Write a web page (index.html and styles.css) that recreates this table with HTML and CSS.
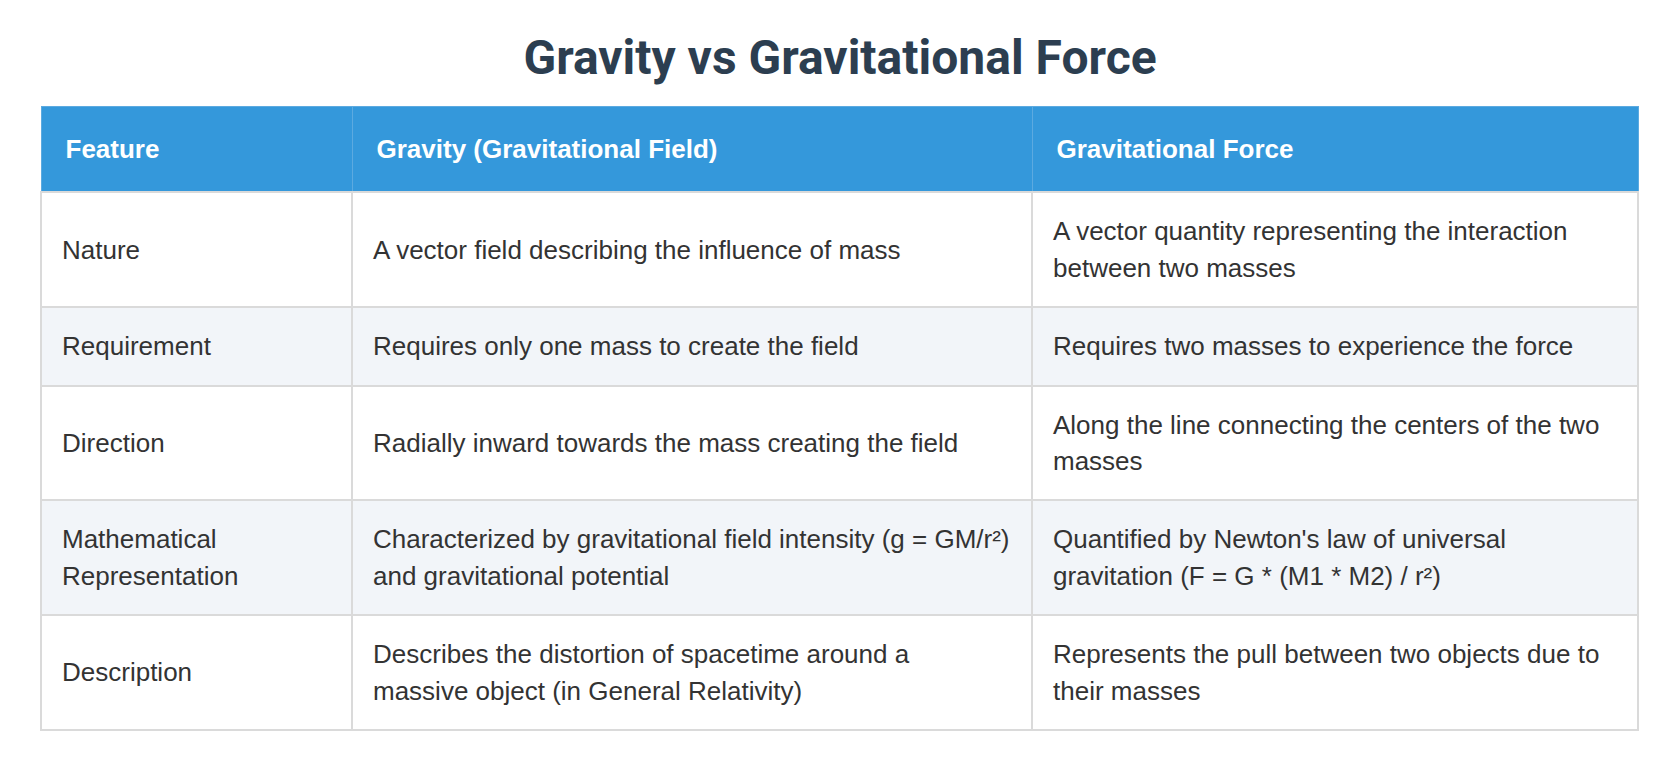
FILE: index.html
```html
<!DOCTYPE html>
<html lang="en">
<head>
<meta charset="utf-8">
<title>Gravity vs Gravitational Force</title>
<link rel="stylesheet" href="styles.css">
</head>
<body>
<main class="page">
  <h1 class="title">Gravity vs Gravitational Force</h1>
  <table class="compare">
    <colgroup>
      <col class="col-feature">
      <col class="col-gravity">
      <col class="col-force">
    </colgroup>
    <thead>
      <tr>
        <th>Feature</th>
        <th>Gravity (Gravitational Field)</th>
        <th>Gravitational Force</th>
      </tr>
    </thead>
    <tbody>
      <tr>
        <td>Nature</td>
        <td>A vector field describing the influence of mass</td>
        <td>A vector quantity representing the interaction between two masses</td>
      </tr>
      <tr>
        <td>Requirement</td>
        <td>Requires only one mass to create the field</td>
        <td>Requires two masses to experience the force</td>
      </tr>
      <tr>
        <td>Direction</td>
        <td>Radially inward towards the mass creating the field</td>
        <td>Along the line connecting the centers of the two masses</td>
      </tr>
      <tr>
        <td>Mathematical Representation</td>
        <td>Characterized by gravitational field intensity (g = GM/r²) and gravitational potential</td>
        <td>Quantified by Newton's law of universal gravitation (F = G * (M1 * M2) / r²)</td>
      </tr>
      <tr>
        <td>Description</td>
        <td>Describes the distortion of spacetime around a massive object (in General Relativity)</td>
        <td>Represents the pull between two objects due to their masses</td>
      </tr>
    </tbody>
  </table>
</main>
</body>
</html>
```

FILE: styles.css
```css
html, body {
  margin: 0;
  padding: 0;
  background: #ffffff;
}

body {
  font-family: "Liberation Sans", Arial, sans-serif;
  color: #333333;
}

.page {
  width: 1600px;
  margin: 0 auto;
  padding-top: 30px;
}

.title {
  margin: 0 0 20px;
  font-family: Roboto, "Liberation Sans", sans-serif;
  font-weight: 700;
  font-size: 48px;
  line-height: 56px;
  color: #2c3e50;
  text-align: center;
}

.compare {
  width: 1597px;
  table-layout: fixed;
  border-collapse: collapse;
  font-size: 26px;
  line-height: 1.4;
}

.col-feature { width: 311px; }
.col-gravity { width: 680px; }
.col-force { width: 606px; }

.compare th {
  background: #3498db;
  color: #ffffff;
  font-weight: 700;
  text-align: left;
  padding: 24px 24px;
  border: 1px solid #5caae0;
}

.compare td {
  padding: 20px 20px;
  border: 2px solid #dadada;
  vertical-align: middle;
  background: #ffffff;
}

.compare tbody tr:nth-child(even) td {
  background: #f2f5f9;
}
```
